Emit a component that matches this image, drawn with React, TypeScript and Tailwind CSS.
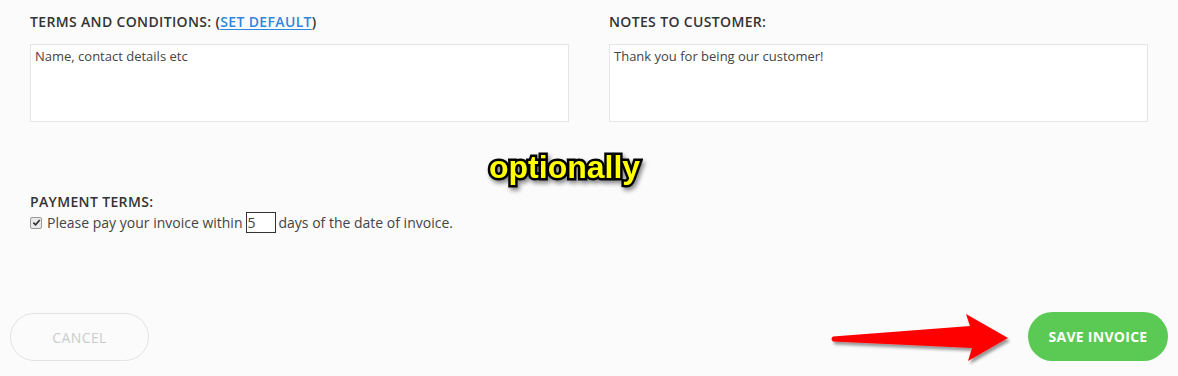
import React from 'react';

const font = "font-['Open_Sans','Noto_Sans',sans-serif]";

export default function App() {
  const [days, setDays] = React.useState('5');

  return (
    <div className={`relative h-[376px] w-full bg-[#fbfbfb] text-[#333] ${font} flex flex-col`}>
      <div className="px-[30px] pt-[13px]">
        <div className="grid grid-cols-[539px_539px] gap-x-[40px]">
          <div>
            <p className="text-[14px] font-semibold tracking-[0.025em] leading-[18px] uppercase">
              Terms and conditions: (<a href="#" className="text-[#2f86dc] underline underline-offset-2">Set default</a>)
            </p>
            <textarea
              defaultValue="Name, contact details etc"
              className="mt-[13px] block w-full h-[78px] resize-none border border-[#e5e5e5] bg-white px-[4px] py-[2px] text-[13px] leading-[18px] text-[#444] outline-none"
            />
          </div>
          <div>
            <p className="text-[14px] font-semibold tracking-[0.025em] leading-[18px] uppercase">Notes to customer:</p>
            <textarea
              defaultValue="Thank you for being our customer!"
              className="mt-[13px] block w-full h-[78px] resize-none border border-[#e5e5e5] bg-white px-[4px] py-[2px] text-[13px] leading-[18px] text-[#444] outline-none"
            />
          </div>
        </div>

        <p className="mt-[71px] text-[14px] font-semibold tracking-[0.025em] leading-[18px] uppercase">Payment terms:</p>
        <div className="mt-[1px] flex items-center text-[14px] leading-[21px] text-[#444]">
          <span className="mr-[5px] flex h-[12px] w-[12px] items-center justify-center rounded-[2px] border border-[#9a9a9a] bg-[#e9e9e9]">
            <svg viewBox="0 0 10 10" className="h-[9px] w-[9px]">
              <path d="M1.5 5.2 L4 7.6 L8.6 2.2" fill="none" stroke="#333" strokeWidth="1.9" />
            </svg>
          </span>
          <span>Please pay your invoice within</span>
          <input
            value={days}
            onChange={e => setDays(e.target.value)}
            className="mx-[3px] h-[21px] w-[30px] border border-[#333] bg-white px-[1px] text-[14px] text-[#444] outline-none"
          />
          <span>days of the date of invoice.</span>
        </div>
      </div>

      <div className="mt-auto mb-[15px] flex items-end justify-between px-[10px]">
        <button className="h-[48px] w-[139px] rounded-full border border-[#e3e3e3] text-[14px] font-normal tracking-[0.03em] text-[#cccccc] uppercase">
          Cancel
        </button>
        <button className="h-[49px] w-[140px] rounded-full bg-[#5aca55] text-[14px] font-bold tracking-[0.02em] text-white uppercase">
          Save invoice
        </button>
      </div>

      {/* annotation overlay */}
      <span className="pointer-events-none absolute left-[489px] top-[148px] font-['Liberation_Sans',Arial,sans-serif] text-[32px] font-bold leading-[38px] text-[#ffff00] [paint-order:stroke_fill] [-webkit-text-stroke:5px_#000] drop-shadow-[2px_3px_2px_rgba(0,0,0,0.45)]">
        optionally
      </span>
      <svg className="pointer-events-none absolute left-0 top-0" width="1178" height="376">
        <defs>
          <filter id="sh" x="-10%" y="-30%" width="120%" height="160%">
            <feDropShadow dx="2" dy="3" stdDeviation="1.6" floodColor="#000" floodOpacity="0.4" />
          </filter>
        </defs>
        <path
          d="M833 336.5 L970 326 L966 314 L1008 338 L968 361 L972 348 L833 341.5 Q830 339 833 336.5 Z"
          fill="#ff0000"
          filter="url(#sh)"
        />
      </svg>
    </div>
  );
}
